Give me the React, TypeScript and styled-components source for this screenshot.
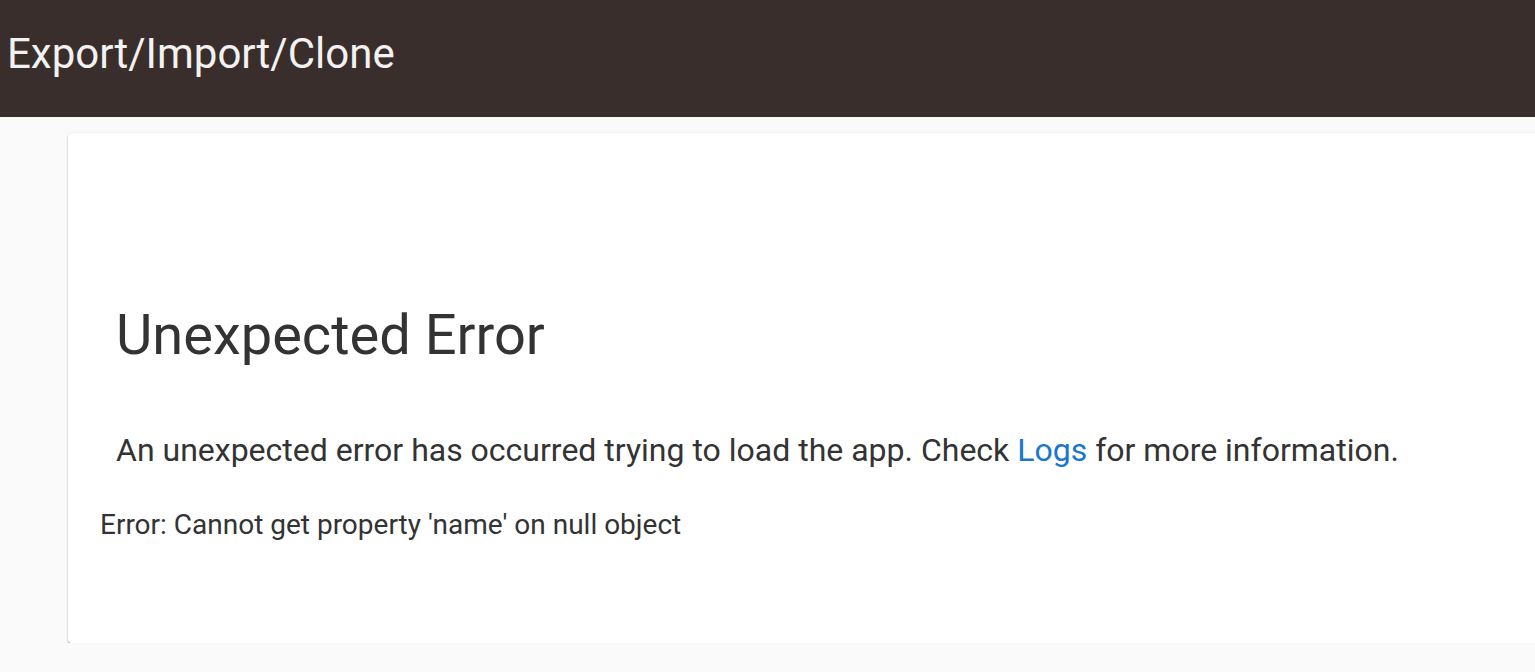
import styled, { createGlobalStyle } from "styled-components";

const GlobalStyle = createGlobalStyle`
  html, body {
    margin: 0;
    padding: 0;
    background-color: #fafafa;
    font-family: Roboto, "Liberation Sans", sans-serif;
    overflow: hidden;
  }
`;

const AppBar = styled.header`
  display: flex;
  align-items: flex-start;
  height: 117px;
  padding: 29px 7px 0;
  background-color: #3a2e2c;
  box-sizing: border-box;
`;

const AppTitle = styled.h1`
  margin: 0;
  font-size: 42px;
  font-weight: 400;
  line-height: normal;
  color: #f2f2f2;
`;

const Main = styled.main`
  display: flex;
  padding: 16px 0 0 68px;
`;

const Card = styled.section`
  flex: 1;
  margin-right: -40px;
  height: 510px;
  box-sizing: border-box;
  padding: 169px 48px 0 48px;
  background-color: #fff;
  border-radius: 4px;
  box-shadow: 0 2px 2px rgba(0, 0, 0, 0.28), 0 0 3px rgba(0, 0, 0, 0.1);
  color: #333;
`;

const Heading = styled.h2`
  margin: 0 0 61px;
  font-size: 56px;
  font-weight: 400;
  line-height: 1.2;
`;

const Message = styled.p`
  margin: 0 0 35px;
  font-size: 32px;
  line-height: 1.3;
`;

const LogsLink = styled.a`
  color: #1976d2;
  text-decoration: none;
`;

const Detail = styled.p<{ $indent: number }>`
  margin: 0 0 0 ${(p) => p.$indent}px;
  font-size: 28px;
  line-height: 1.3;
`;

function App() {
  return (
    <>
      <GlobalStyle />
      <AppBar>
        <AppTitle>Export/Import/Clone</AppTitle>
      </AppBar>
      <Main>
        <Card>
          <Heading>Unexpected Error</Heading>
          <Message>
            An unexpected error has occurred trying to load the app. Check{" "}
            <LogsLink href="#">Logs</LogsLink> for more information.
          </Message>
          <Detail $indent={-16}>
            Error: Cannot get property 'name' on null object
          </Detail>
        </Card>
      </Main>
    </>
  );
}

export default App;
